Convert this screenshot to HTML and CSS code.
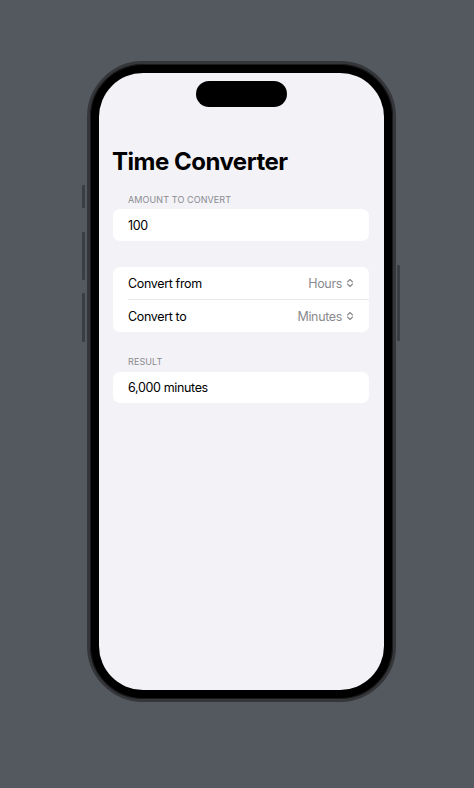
FILE: index.html
```html
<!DOCTYPE html>
<html lang="en">
<head>
<meta charset="utf-8">
<title>Time Converter</title>
<link rel="stylesheet" href="styles.css">
</head>
<body>
<div class="stage">
  <div class="phone">
    <span class="btn btn-action"></span>
    <span class="btn btn-vol-up"></span>
    <span class="btn btn-vol-down"></span>
    <span class="btn btn-power"></span>
    <div class="screen">
      <div class="island"></div>
      <h1 class="title">Time Converter</h1>

      <div class="section-label">AMOUNT TO CONVERT</div>
      <div class="card">
        <div class="row"><span class="row-text">100</span></div>
      </div>

      <div class="card card-spaced">
        <div class="row">
          <span class="row-text">Convert from</span>
          <span class="picker">Hours
            <svg class="chev" viewBox="0 0 8 10" width="8" height="10"><path d="M1.5 4 L4 1.5 L6.5 4 M1.5 6 L4 8.5 L6.5 6" fill="none" stroke="#8a8a8e" stroke-width="1.1" stroke-linecap="round" stroke-linejoin="round"/></svg>
          </span>
        </div>
        <div class="divider"></div>
        <div class="row">
          <span class="row-text">Convert to</span>
          <span class="picker">Minutes
            <svg class="chev" viewBox="0 0 8 10" width="8" height="10"><path d="M1.5 4 L4 1.5 L6.5 4 M1.5 6 L4 8.5 L6.5 6" fill="none" stroke="#8a8a8e" stroke-width="1.1" stroke-linecap="round" stroke-linejoin="round"/></svg>
          </span>
        </div>
      </div>

      <div class="section-label section-label-result">RESULT</div>
      <div class="card">
        <div class="row row-result"><span class="row-text">6,000 minutes</span></div>
      </div>
    </div>
  </div>
</div>
</body>
</html>
```

FILE: styles.css
```css
* { box-sizing: border-box; }

html, body {
  margin: 0;
  padding: 0;
  height: 100%;
}

body {
  background: #545960;
  font-family: Inter, "Noto Sans", "Liberation Sans", sans-serif;
  color: #000;
}

.stage {
  padding: 61px 0 0 87px;
}

.phone {
  position: relative;
  width: 309px;
  height: 641px;
  border: 3px solid #34363a;
  border-radius: 56px;
  background: #000;
  padding: 9px;
  box-shadow: inset 0 0 0 1px #1a1a1c;
}

.btn {
  position: absolute;
  width: 3px;
  background: #3a3d41;
  border-radius: 1px;
}
.btn-action   { left: -8px; top: 121px; height: 23px; }
.btn-vol-up   { left: -8px; top: 168px; height: 48px; }
.btn-vol-down { left: -8px; top: 229px; height: 49px; }
.btn-power    { right: -7px; top: 201px; height: 76px; }

.screen {
  position: relative;
  width: 100%;
  height: 100%;
  background: #f2f2f7;
  border-radius: 44px;
  overflow: hidden;
  padding: 74px 15px 0 14px;
}

.island {
  position: absolute;
  left: 97px;
  top: 8px;
  width: 91px;
  height: 26px;
  border-radius: 13px;
  background: #000;
}

.title {
  margin: 0 0 0 -1px;
  font-size: 24px;
  line-height: 29px;
  font-weight: 700;
  letter-spacing: -0.5px;
}

.section-label {
  margin: 18px 0 4px 15px;
  font-size: 9px;
  line-height: 11px;
  color: #8a8a8e;
  letter-spacing: 0.1px;
}
.section-label-result {
  margin-top: 24px;
  margin-bottom: 5px;
}

.card {
  background: #fff;
  border-radius: 7px;
}
.card-spaced {
  margin-top: 26px;
}

.row {
  display: flex;
  align-items: center;
  justify-content: space-between;
  height: 32px;
  padding: 0 15px 0 15px;
}
.row-result {
  height: 31px;
}

.row-text {
  font-size: 12.5px;
  letter-spacing: -0.35px;
}

.divider {
  height: 1px;
  background: #e6e6eb;
  margin-left: 15px;
}

.picker {
  display: flex;
  align-items: center;
  gap: 4px;
  font-size: 12.5px;
  letter-spacing: -0.35px;
  color: #8a8a8e;
}

.chev {
  display: block;
}
```
